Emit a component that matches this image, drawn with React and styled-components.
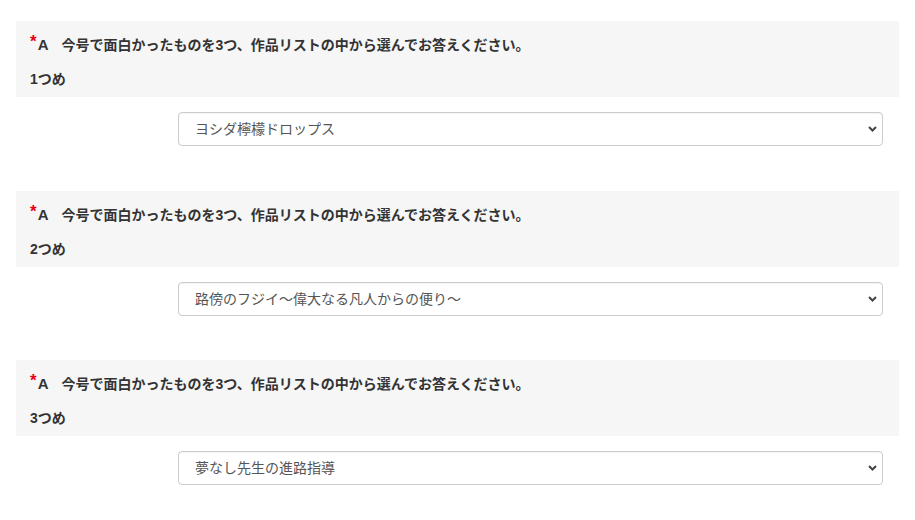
import React, { useState } from 'react'
import styled, { createGlobalStyle } from 'styled-components'

const GlobalStyle = createGlobalStyle`
  body {
    margin: 0;
    background: #fff;
    font-family: "Liberation Sans", "Noto Sans CJK JP", sans-serif;
    color: #333;
  }
`

const Page = styled.div`
  padding: 21px 16px 0;
  display: flex;
  flex-direction: column;
  gap: 44.5px;
`

const Question = styled.div`
  display: flex;
  flex-direction: column;
  gap: 15px;
`

const Head = styled.div`
  background: #f6f6f6;
  padding: 14px 14px 8px;
  display: flex;
  flex-direction: column;
  gap: 14px;
`

const Line = styled.div`
  font-size: 14px;
  font-weight: bold;
  line-height: 20px;
  color: #333;
  white-space: nowrap;
`

const Required = styled.span`
  color: #e60012;
  font-size: 17px;
  vertical-align: top;
  line-height: 14px;
  margin-right: 1px;
`

const Mark = styled.span`
  font-size: 15px;
  margin-right: 13px;
`

const Row = styled.div`
  padding: 0 16px 0 162px;
`

const SelectWrap = styled.div`
  position: relative;
`

const Select = styled.select`
  appearance: none;
  width: 100%;
  height: 34px;
  border: 1px solid #ccc;
  border-radius: 4px;
  background: #fff;
  padding: 0 30px 0 16px;
  font-family: "Liberation Sans", "Noto Sans CJK JP", sans-serif;
  font-size: 14px;
  color: #555;
  box-shadow: inset 0 1px 1px rgba(0, 0, 0, 0.04);
`

const Chevron = styled.svg`
  position: absolute;
  right: 6px;
  top: 13px;
  width: 9px;
  height: 8px;
  pointer-events: none;
`

const options = [
  'ヨシダ檸檬ドロップス',
  '路傍のフジイ〜偉大なる凡人からの便り〜',
  '夢なし先生の進路指導',
]

const questions = [
  { id: 1, label: '1つめ', value: 'ヨシダ檸檬ドロップス' },
  { id: 2, label: '2つめ', value: '路傍のフジイ〜偉大なる凡人からの便り〜' },
  { id: 3, label: '3つめ', value: '夢なし先生の進路指導' },
]

const Item = ({ label, initial }) => {
  const [value, setValue] = useState(initial)
  return (
    <Question>
      <Head>
        <Line>
          <Required>*</Required>
          <Mark>A</Mark>
          今号で面白かったものを3つ、作品リストの中から選んでお答えください。
        </Line>
        <Line>{label}</Line>
      </Head>
      <Row>
        <SelectWrap>
          <Select value={value} onChange={e => setValue(e.target.value)}>
            {options.map(o => <option key={o} value={o}>{o}</option>)}
          </Select>
          <Chevron viewBox="0 0 9 8">
            <path d="M1 2 L4.5 5.5 L8 2" fill="none" stroke="#444" strokeWidth="2" />
          </Chevron>
        </SelectWrap>
      </Row>
    </Question>
  )
}

const App = () => (
  <>
    <GlobalStyle />
    <Page>
      {questions.map(q => <Item key={q.id} label={q.label} initial={q.value} />)}
    </Page>
  </>
)

export default App
